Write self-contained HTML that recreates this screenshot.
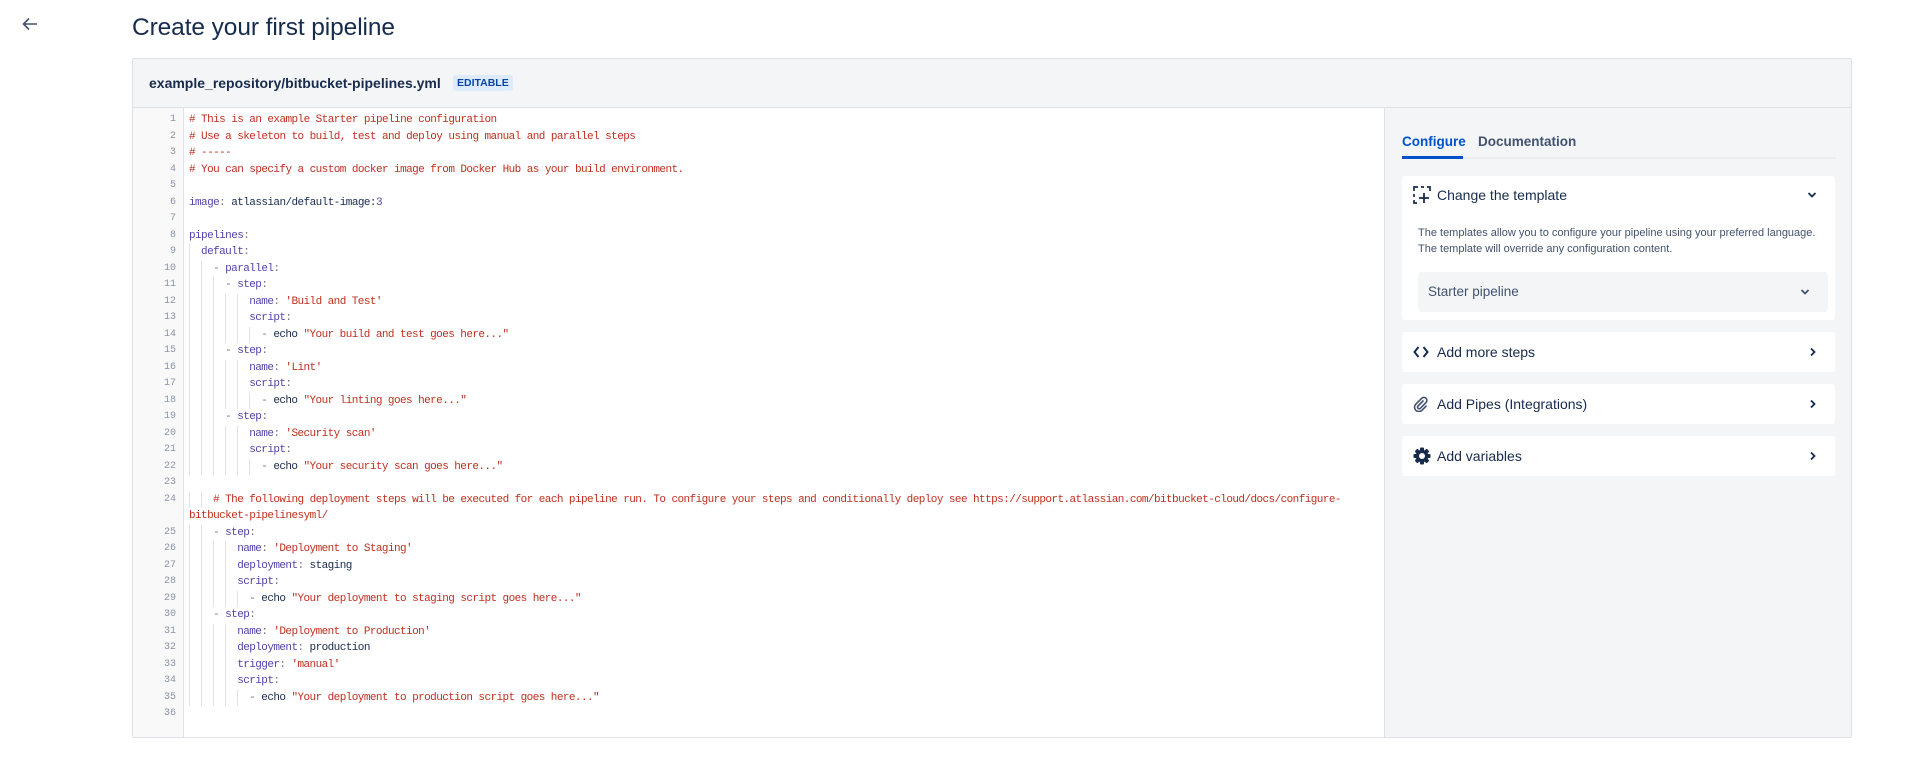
<!DOCTYPE html>
<html><head><meta charset="utf-8">
<style>
*{box-sizing:border-box;margin:0;padding:0}
body{width:1920px;height:760px;background:#fff;font-family:"Liberation Sans",Arial,sans-serif;color:#172b4d;position:relative;overflow:hidden}
.abs{position:absolute}
h1{position:absolute;left:132px;top:14px;font-size:24.5px;font-weight:400;color:#172b4d;letter-spacing:-0.1px}
.box{position:absolute;left:132px;top:58px;width:1720px;height:680px;border:1px solid #dfe1e6;border-radius:2px;background:#fff}
.hdr{position:absolute;left:0;top:0;right:0;height:49px;background:#f4f5f7;border-bottom:1px solid #dfe1e6}
.fname{position:absolute;left:16px;top:16px;font-size:14px;font-weight:700;color:#172b4d}
.badge{position:absolute;left:320px;top:16px;height:16px;padding:0 4px;background:#deebff;color:#0747a6;font-size:10.5px;font-weight:700;line-height:16px;border-radius:3px}
.gut{position:absolute;left:0;top:49px;width:51px;bottom:0;background:#f9f9f9;border-right:1px solid #dfe1e6}
.code{position:absolute;left:0;top:53px;font-family:"Liberation Mono",monospace;font-size:11px;letter-spacing:-0.57px}
.r{height:16.5px;line-height:16.5px;white-space:pre;position:relative}
.n{position:absolute;left:0;width:43px;text-align:right;color:#8993a4;font-size:10px;letter-spacing:0}
.t{position:absolute;left:56px;color:#172b4d}
.g{display:inline-block;width:12.06px;height:16.5px;border-left:1px solid #dfe1e6;vertical-align:top}
.c{color:#bf2f1f}.k{color:#5243aa}.s{color:#bf2f1f}.d{color:#6b778c}.v{color:#172b4d}
.panel{position:absolute;left:1251px;top:49px;right:0;bottom:0;background:#f4f5f7;border-left:1px solid #dfe1e6}
.tab{position:absolute;top:26px;font-size:13.5px;font-weight:700;color:#42526e}
.card{position:absolute;left:17px;width:433px;background:#fff;border-radius:3px}
.ct{position:absolute;left:35px;font-size:14px;color:#172b4d}
.ic{position:absolute;left:11px}
.chev{position:absolute;right:18px}
</style></head><body>
<svg class="abs" style="left:22px;top:17px" width="16" height="14" viewBox="0 0 16 14"><path d="M15 7H2M7 1.5 1.5 7 7 12.5" fill="none" stroke="#42526e" stroke-width="1.6"/></svg>
<h1>Create your first pipeline</h1>
<div class="box">
 <div class="hdr"><div class="fname">example_repository/bitbucket-pipelines.yml</div><div class="badge">EDITABLE</div></div>
 <div class="gut"></div>
 <div class="code">
<div class="r"><span class="n">1</span><span class="t c"># This is an example Starter pipeline configuration</span></div>
<div class="r"><span class="n">2</span><span class="t c"># Use a skeleton to build, test and deploy using manual and parallel steps</span></div>
<div class="r"><span class="n">3</span><span class="t c"># -----</span></div>
<div class="r"><span class="n">4</span><span class="t c"># You can specify a custom docker image from Docker Hub as your build environment.</span></div>
<div class="r"><span class="n">5</span><span class="t"></span></div>
<div class="r"><span class="n">6</span><span class="t"><span class="k">image</span><span class="d">:</span> atlassian/default-image:<span class="k">3</span></span></div>
<div class="r"><span class="n">7</span><span class="t"></span></div>
<div class="r"><span class="n">8</span><span class="t"><span class="k">pipelines</span><span class="d">:</span></span></div>
<div class="r"><span class="n">9</span><span class="t"><i class="g"></i><span class="k">default</span><span class="d">:</span></span></div>
<div class="r"><span class="n">10</span><span class="t"><i class="g"></i><i class="g"></i><span class="d">- </span><span class="k">parallel</span><span class="d">:</span></span></div>
<div class="r"><span class="n">11</span><span class="t"><i class="g"></i><i class="g"></i><i class="g"></i><span class="d">- </span><span class="k">step</span><span class="d">:</span></span></div>
<div class="r"><span class="n">12</span><span class="t"><i class="g"></i><i class="g"></i><i class="g"></i><i class="g"></i><i class="g"></i><span class="k">name</span><span class="d">:</span> <span class="s">'Build and Test'</span></span></div>
<div class="r"><span class="n">13</span><span class="t"><i class="g"></i><i class="g"></i><i class="g"></i><i class="g"></i><i class="g"></i><span class="k">script</span><span class="d">:</span></span></div>
<div class="r"><span class="n">14</span><span class="t"><i class="g"></i><i class="g"></i><i class="g"></i><i class="g"></i><i class="g"></i><i class="g"></i><span class="d">- </span>echo <span class="s">"Your build and test goes here..."</span></span></div>
<div class="r"><span class="n">15</span><span class="t"><i class="g"></i><i class="g"></i><i class="g"></i><span class="d">- </span><span class="k">step</span><span class="d">:</span></span></div>
<div class="r"><span class="n">16</span><span class="t"><i class="g"></i><i class="g"></i><i class="g"></i><i class="g"></i><i class="g"></i><span class="k">name</span><span class="d">:</span> <span class="s">'Lint'</span></span></div>
<div class="r"><span class="n">17</span><span class="t"><i class="g"></i><i class="g"></i><i class="g"></i><i class="g"></i><i class="g"></i><span class="k">script</span><span class="d">:</span></span></div>
<div class="r"><span class="n">18</span><span class="t"><i class="g"></i><i class="g"></i><i class="g"></i><i class="g"></i><i class="g"></i><i class="g"></i><span class="d">- </span>echo <span class="s">"Your linting goes here..."</span></span></div>
<div class="r"><span class="n">19</span><span class="t"><i class="g"></i><i class="g"></i><i class="g"></i><span class="d">- </span><span class="k">step</span><span class="d">:</span></span></div>
<div class="r"><span class="n">20</span><span class="t"><i class="g"></i><i class="g"></i><i class="g"></i><i class="g"></i><i class="g"></i><span class="k">name</span><span class="d">:</span> <span class="s">'Security scan'</span></span></div>
<div class="r"><span class="n">21</span><span class="t"><i class="g"></i><i class="g"></i><i class="g"></i><i class="g"></i><i class="g"></i><span class="k">script</span><span class="d">:</span></span></div>
<div class="r"><span class="n">22</span><span class="t"><i class="g"></i><i class="g"></i><i class="g"></i><i class="g"></i><i class="g"></i><i class="g"></i><span class="d">- </span>echo <span class="s">"Your security scan goes here..."</span></span></div>
<div class="r"><span class="n">23</span><span class="t"></span></div>
<div class="r"><span class="n">24</span><span class="t"><i class="g"></i><i class="g"></i><span class="c"># The following deployment steps will be executed for each pipeline run. To configure your steps and conditionally deploy see https://support.atlassian.com/bitbucket-cloud/docs/configure-</span></span></div>
<div class="r"><span class="t c">bitbucket-pipelinesyml/</span></div>
<div class="r"><span class="n">25</span><span class="t"><i class="g"></i><i class="g"></i><span class="d">- </span><span class="k">step</span><span class="d">:</span></span></div>
<div class="r"><span class="n">26</span><span class="t"><i class="g"></i><i class="g"></i><i class="g"></i><i class="g"></i><span class="k">name</span><span class="d">:</span> <span class="s">'Deployment to Staging'</span></span></div>
<div class="r"><span class="n">27</span><span class="t"><i class="g"></i><i class="g"></i><i class="g"></i><i class="g"></i><span class="k">deployment</span><span class="d">:</span> staging</span></div>
<div class="r"><span class="n">28</span><span class="t"><i class="g"></i><i class="g"></i><i class="g"></i><i class="g"></i><span class="k">script</span><span class="d">:</span></span></div>
<div class="r"><span class="n">29</span><span class="t"><i class="g"></i><i class="g"></i><i class="g"></i><i class="g"></i><i class="g"></i><span class="d">- </span>echo <span class="s">"Your deployment to staging script goes here..."</span></span></div>
<div class="r"><span class="n">30</span><span class="t"><i class="g"></i><i class="g"></i><span class="d">- </span><span class="k">step</span><span class="d">:</span></span></div>
<div class="r"><span class="n">31</span><span class="t"><i class="g"></i><i class="g"></i><i class="g"></i><i class="g"></i><span class="k">name</span><span class="d">:</span> <span class="s">'Deployment to Production'</span></span></div>
<div class="r"><span class="n">32</span><span class="t"><i class="g"></i><i class="g"></i><i class="g"></i><i class="g"></i><span class="k">deployment</span><span class="d">:</span> production</span></div>
<div class="r"><span class="n">33</span><span class="t"><i class="g"></i><i class="g"></i><i class="g"></i><i class="g"></i><span class="k">trigger</span><span class="d">:</span> <span class="s">'manual'</span></span></div>
<div class="r"><span class="n">34</span><span class="t"><i class="g"></i><i class="g"></i><i class="g"></i><i class="g"></i><span class="k">script</span><span class="d">:</span></span></div>
<div class="r"><span class="n">35</span><span class="t"><i class="g"></i><i class="g"></i><i class="g"></i><i class="g"></i><i class="g"></i><span class="d">- </span>echo <span class="s">"Your deployment to production script goes here..."</span></span></div>
<div class="r"><span class="n">36</span><span class="t"></span></div>
 </div>
 <div class="panel">
  <div class="tab" style="left:17px;color:#0052cc">Configure</div>
  <div class="tab" style="left:93px">Documentation</div>
  <div class="abs" style="left:17px;top:49px;width:434px;height:2px;background:#ebecf0"></div>
  <div class="abs" style="left:17px;top:48px;width:61px;height:3px;background:#0052cc"></div>
  <div class="card" style="top:68px;height:144px">
   <svg class="ic" style="top:10px" width="18" height="18" viewBox="0 0 18 18"><path d="M1 5V1h4M8 1h3M14 1h3v4M1 8v3M1 14v3h3" fill="none" stroke="#172b4d" stroke-width="1.7"/><path d="M11 7v10M6 12h10" stroke="#172b4d" stroke-width="1.8"/></svg>
   <div class="ct" style="top:11px">Change the template</div>
   <svg class="chev" style="top:15px" width="10" height="8" viewBox="0 0 10 8"><path d="M1.5 2 5 5.5 8.5 2" fill="none" stroke="#172b4d" stroke-width="1.8"/></svg>
   <div class="abs" style="left:16px;top:49px;font-size:11px;line-height:16px;color:#42526e">The templates allow you to configure your pipeline using your preferred language.<br>The template will override any configuration content.</div>
   <div class="abs" style="left:16px;top:96px;width:410px;height:40px;background:#f4f5f7;border-radius:3px">
    <div class="abs" style="left:10px;top:12px;font-size:13.5px;color:#42526e">Starter pipeline</div>
    <svg class="abs" style="right:18px;top:16px" width="10" height="8" viewBox="0 0 10 8"><path d="M1.5 2 5 5.5 8.5 2" fill="none" stroke="#42526e" stroke-width="1.8"/></svg>
   </div>
  </div>
  <div class="card" style="top:224px;height:40px">
   <svg class="ic" style="top:12px" width="16" height="16" viewBox="0 0 16 16"><path d="M5.5 3 1.5 8l4 5M10.5 3l4 5-4 5" fill="none" stroke="#172b4d" stroke-width="2"/></svg>
   <div class="ct" style="top:12px">Add more steps</div>
   <svg class="chev" style="top:15px" width="8" height="10" viewBox="0 0 8 10"><path d="M2 1.5 5.5 5 2 8.5" fill="none" stroke="#172b4d" stroke-width="1.8"/></svg>
  </div>
  <div class="card" style="top:276px;height:40px">
   <svg class="ic" style="top:12px" width="16" height="16" viewBox="0 0 16 16"><path d="M10.5 4.5 5 10a1.6 1.6 0 0 0 2.3 2.3L13 6.6a3 3 0 0 0-4.3-4.3L2.8 8.2a4.3 4.3 0 0 0 6.1 6.1l4.6-4.6" fill="none" stroke="#42526e" stroke-width="1.6"/></svg>
   <div class="ct" style="top:12px">Add Pipes (Integrations)</div>
   <svg class="chev" style="top:15px" width="8" height="10" viewBox="0 0 8 10"><path d="M2 1.5 5.5 5 2 8.5" fill="none" stroke="#172b4d" stroke-width="1.8"/></svg>
  </div>
  <div class="card" style="top:328px;height:40px">
   <svg class="ic" style="top:11px" width="18" height="18" viewBox="0 0 18 18"><g fill="#172b4d"><circle cx="9" cy="9" r="6.3"/><rect x="7" y="0.5" width="4" height="4" rx="1"/><rect x="7" y="13.5" width="4" height="4" rx="1"/><rect x="0.5" y="7" width="4" height="4" rx="1"/><rect x="13.5" y="7" width="4" height="4" rx="1"/><rect x="7" y="0.5" width="4" height="4" rx="1" transform="rotate(45 9 9)"/><rect x="7" y="13.5" width="4" height="4" rx="1" transform="rotate(45 9 9)"/><rect x="0.5" y="7" width="4" height="4" rx="1" transform="rotate(45 9 9)"/><rect x="13.5" y="7" width="4" height="4" rx="1" transform="rotate(45 9 9)"/></g><circle cx="9" cy="9" r="3" fill="#fff"/></svg>
   <div class="ct" style="top:12px">Add variables</div>
   <svg class="chev" style="top:15px" width="8" height="10" viewBox="0 0 8 10"><path d="M2 1.5 5.5 5 2 8.5" fill="none" stroke="#172b4d" stroke-width="1.8"/></svg>
  </div>
 </div>
</div>
</body></html>
